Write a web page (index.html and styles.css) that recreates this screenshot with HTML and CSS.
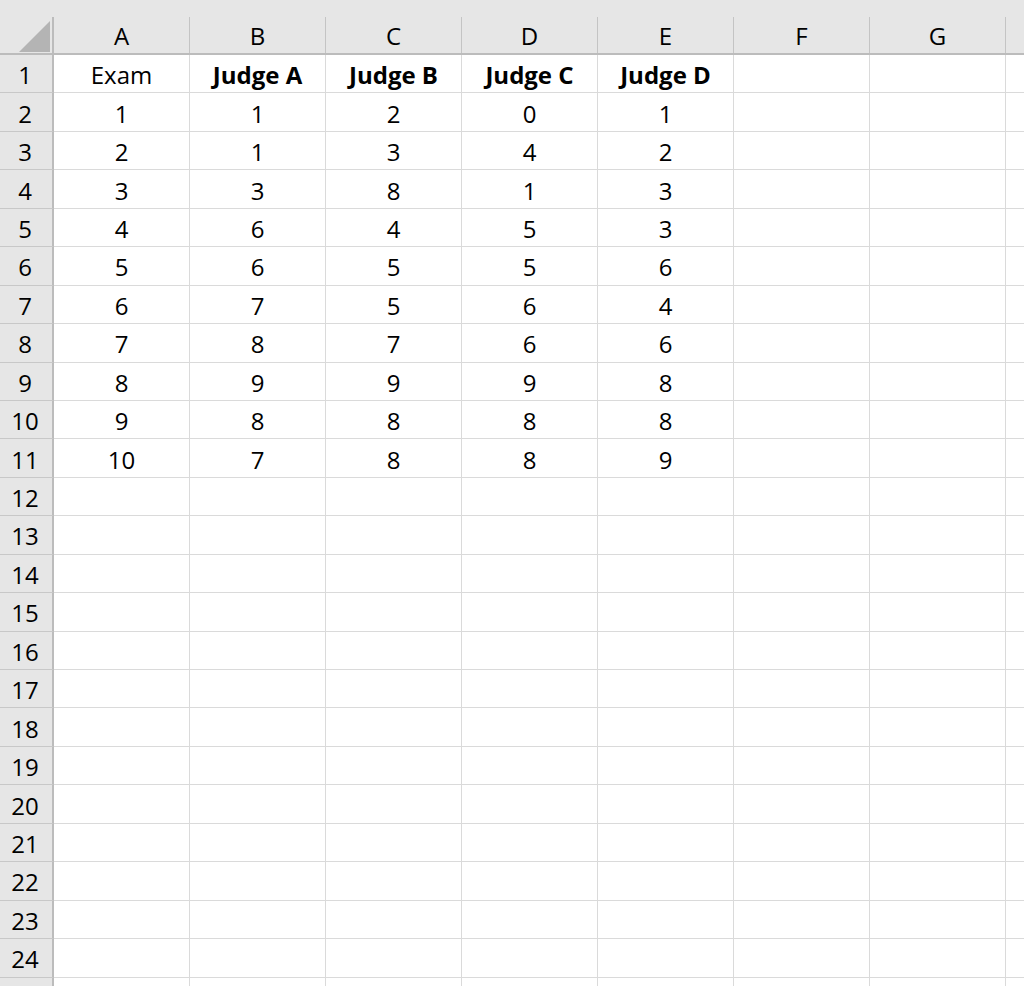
FILE: index.html
```html
<!DOCTYPE html>
<html lang="en">

<head>
    <meta charset="UTF-8">
    <meta name="viewport" content="width=device-width, initial-scale=1.0">
    <title>Judges</title>
    <link rel="stylesheet" href="styles.css">
</head>

<body>
    <div class="sheet">
        <div class="col-heads">
            <div class="corner"><span class="tri"></span></div>
            <div class="ch">A</div>
            <div class="ch">B</div>
            <div class="ch">C</div>
            <div class="ch">D</div>
            <div class="ch">E</div>
            <div class="ch">F</div>
            <div class="ch">G</div>
            <div class="ch last"></div>
        </div>
        <div id="rows"></div>
    </div>

    <script>
        var data = [
            ['Exam', 'Judge A', 'Judge B', 'Judge C', 'Judge D'],
            [1, 1, 2, 0, 1],
            [2, 1, 3, 4, 2],
            [3, 3, 8, 1, 3],
            [4, 6, 4, 5, 3],
            [5, 6, 5, 5, 6],
            [6, 7, 5, 6, 4],
            [7, 8, 7, 6, 6],
            [8, 9, 9, 9, 8],
            [9, 8, 8, 8, 8],
            [10, 7, 8, 8, 9]
        ];

        var rows = document.getElementById('rows');
        // 24 numbered rows, plus the top edge of row 25
        for (var r = 0; r < 25; r++) {
            var row = document.createElement('div');
            row.className = 'row';
            var head = document.createElement('div');
            head.className = 'rh';
            if (r < 24) head.textContent = r + 1;
            row.appendChild(head);
            for (var c = 0; c < 8; c++) {
                var cell = document.createElement('div');
                cell.className = 'cell';
                if (c == 7) cell.className += ' last';
                if (data[r] && c < 5) {
                    cell.textContent = data[r][c];
                    if (r == 0 && c > 0) cell.className += ' bold';
                }
                row.appendChild(cell);
            }
            rows.appendChild(row);
        }
    </script>
</body>

</html>
```

FILE: styles.css
```css
body {
    margin: 0;
    font-family: "Open Sans", sans-serif;
    font-size: 24px;
    color: #000;
    background: #fff;
    overflow: hidden;
}

.sheet {
    width: 1024px;
    height: 986px;
    overflow: hidden;
}

.col-heads {
    display: flex;
    height: 55px;
    background: #e6e6e6;
    border-bottom: 2px solid #bcbcbc;
    box-sizing: border-box;
}

.corner {
    width: 54px;
    flex: none;
    margin-top: 17px;
    border-right: 2px solid #bcbcbc;
    box-sizing: border-box;
    position: relative;
}

.tri {
    position: absolute;
    right: 2px;
    bottom: 1px;
    width: 31px;
    height: 31px;
    background: #b4b4b4;
    clip-path: polygon(100% 0, 100% 100%, 0 100%);
}

.ch {
    width: 136px;
    flex: none;
    margin-top: 17px;
    border-right: 1px solid #c4c4c4;
    box-sizing: border-box;
    display: flex;
    align-items: center;
    justify-content: center;
    line-height: 1;
    padding-top: 2px;
}

.ch.last {
    flex: 1;
    border-right: none;
}

.row {
    display: flex;
    height: 38.45px;
}

.rh {
    width: 54px;
    flex: none;
    background: #e6e6e6;
    border-right: 2px solid #bcbcbc;
    border-bottom: 1px solid #c8c8c8;
    box-sizing: border-box;
    display: flex;
    align-items: center;
    justify-content: center;
    line-height: 1;
    padding: 3px 2px 0 0;
}

.cell {
    width: 136px;
    flex: none;
    border-right: 1px solid #dadada;
    border-bottom: 1px solid #dadada;
    box-sizing: border-box;
    display: flex;
    align-items: center;
    justify-content: center;
    line-height: 1;
    padding-top: 3px;
}

.cell.last {
    flex: 1;
    border-right: none;
}

.bold {
    font-weight: bold;
}
```
